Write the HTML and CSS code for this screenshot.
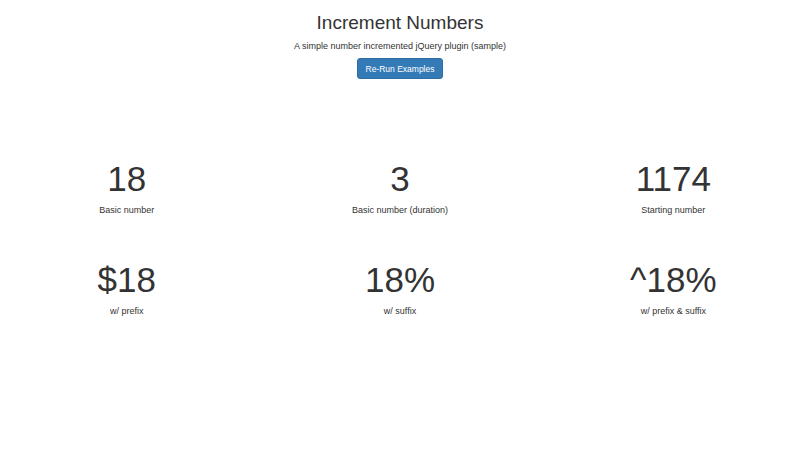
FILE: index.html
```html
<!DOCTYPE html>
<html lang="en">

<head>
    <meta charset="UTF-8">
    <meta name="viewport" content="width=device-width, initial-scale=1.0">
    <title>Increment Numbers</title>

    <link rel="stylesheet" href="styles.css">
</head>

<body>
    <header class="intro">
        <h1>Increment Numbers</h1>
        <p>A simple number incremented jQuery plugin (sample)</p>
        <button class="btn">Re-Run Examples</button>
    </header>

    <section class="examples">
        <div class="item">
            <h2 class="num">18</h2>
            <p>Basic number</p>
        </div>
        <div class="item">
            <h2 class="num">3</h2>
            <p>Basic number (duration)</p>
        </div>
        <div class="item">
            <h2 class="num">1174</h2>
            <p>Starting number</p>
        </div>
        <div class="item">
            <h2 class="num">$18</h2>
            <p>w/ prefix</p>
        </div>
        <div class="item">
            <h2 class="num">18%</h2>
            <p>w/ suffix</p>
        </div>
        <div class="item">
            <h2 class="num">^18%</h2>
            <p>w/ prefix &amp; suffix</p>
        </div>
    </section>
</body>

</html>
```

FILE: styles.css
```css
* {
    padding: 0;
    margin: 0;
    box-sizing: border-box;
}

body {
    background: white;
    color: #333;
    font-family: "Liberation Sans", Arial, sans-serif;
}

.intro {
    text-align: center;
    padding-top: 11px;
    display: flex;
    flex-direction: column;
    align-items: center;
}

.intro h1 {
    font-size: 19px;
    font-weight: normal;
    line-height: 24px;
}

.intro p {
    font-size: 9px;
    line-height: 14px;
    margin-top: 4px;
}

.btn {
    margin-top: 5px;
    height: 21px;
    padding: 0 8px;
    font-family: inherit;
    font-size: 8.5px;
    color: white;
    background-color: #337ab7;
    border: 1px solid #2e6da4;
    border-radius: 3px;
    cursor: pointer;
}

.examples {
    width: 820px;
    margin-left: -10px;
    margin-top: 80px;
    display: grid;
    grid-template-columns: repeat(3, 1fr);
    row-gap: 43px;
    text-align: center;
}

.num {
    font-size: 35px;
    font-weight: normal;
    line-height: 40px;
}

.item p {
    font-size: 9px;
    line-height: 14px;
    margin-top: 4px;
}
```
